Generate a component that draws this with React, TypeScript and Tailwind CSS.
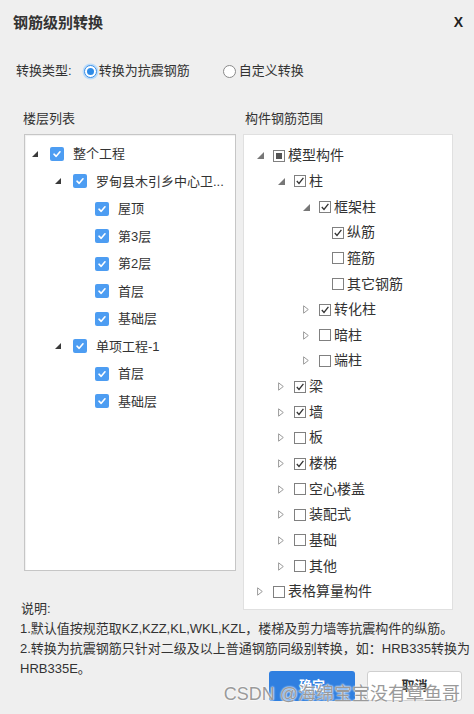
import React from "react";

type LeftNode = { label: string; level: number; expand?: boolean };
type RightNode = {
  label: string;
  level: number;
  tri: "open" | "closed" | "none";
  state: "on" | "off" | "part";
};

const leftTree: LeftNode[] = [
  { label: "整个工程", level: 0, expand: true },
  { label: "罗甸县木引乡中心卫...", level: 1, expand: true },
  { label: "屋顶", level: 2 },
  { label: "第3层", level: 2 },
  { label: "第2层", level: 2 },
  { label: "首层", level: 2 },
  { label: "基础层", level: 2 },
  { label: "单项工程-1", level: 1, expand: true },
  { label: "首层", level: 2 },
  { label: "基础层", level: 2 },
];

const rightTree: RightNode[] = [
  { label: "模型构件", level: 0, tri: "open", state: "part" },
  { label: "柱", level: 1, tri: "open", state: "on" },
  { label: "框架柱", level: 2, tri: "open", state: "on" },
  { label: "纵筋", level: 3, tri: "none", state: "on" },
  { label: "箍筋", level: 3, tri: "none", state: "off" },
  { label: "其它钢筋", level: 3, tri: "none", state: "off" },
  { label: "转化柱", level: 2, tri: "closed", state: "on" },
  { label: "暗柱", level: 2, tri: "closed", state: "off" },
  { label: "端柱", level: 2, tri: "closed", state: "off" },
  { label: "梁", level: 1, tri: "closed", state: "on" },
  { label: "墙", level: 1, tri: "closed", state: "on" },
  { label: "板", level: 1, tri: "closed", state: "off" },
  { label: "楼梯", level: 1, tri: "closed", state: "on" },
  { label: "空心楼盖", level: 1, tri: "closed", state: "off" },
  { label: "装配式", level: 1, tri: "closed", state: "off" },
  { label: "基础", level: 1, tri: "closed", state: "off" },
  { label: "其他", level: 1, tri: "closed", state: "off" },
  { label: "表格算量构件", level: 0, tri: "closed", state: "off" },
];

const leftIndent = ["pl-[4px]", "pl-[27px]", "pl-[49px]"];
const rightIndent = ["pl-[11px]", "pl-[32px]", "pl-[57px]", "pl-[70px]"];

function BlueCheck() {
  return (
    <span className="flex h-[14px] w-[14px] items-center justify-center rounded-[2px] bg-[#4d9df2]">
      <svg width="10" height="10" viewBox="0 0 10 10">
        <polyline
          points="2,5.2 4.2,7.3 8,2.8"
          fill="none"
          stroke="white"
          strokeWidth="1.6"
          strokeLinecap="round"
          strokeLinejoin="round"
        />
      </svg>
    </span>
  );
}

function GrayCheck({ state }: { state: RightNode["state"] }) {
  return (
    <span className="flex h-[12px] w-[12px] items-center justify-center border border-[#808080] bg-white">
      {state === "on" && (
        <svg width="10" height="10" viewBox="0 0 10 10">
          <polyline
            points="1.8,5 4,7.4 8.4,1.8"
            fill="none"
            stroke="#333"
            strokeWidth="1.3"
          />
        </svg>
      )}
      {state === "part" && <span className="h-[6px] w-[6px] bg-[#555]" />}
    </span>
  );
}

function Radio({ on }: { on?: boolean }) {
  return on ? (
    <span className="flex h-[13px] w-[13px] items-center justify-center rounded-full border border-[#3a8ee6] bg-white shadow-[0_0_0_1.5px_#bcdcfa]">
      <span className="h-[7px] w-[7px] rounded-full bg-[#2f8be6]" />
    </span>
  ) : (
    <span className="h-[13px] w-[13px] rounded-full border border-[#8a8a8a] bg-white" />
  );
}

export default function App() {
  return (
    <div className="relative h-[714px] w-[474px] overflow-hidden bg-[#efefef] font-['Liberation_Sans','Noto_Sans_CJK_SC',sans-serif] text-[#333]">
      <div className="flex h-[44px] items-center justify-between pl-[13px] pr-[11px]">
        <span className="text-[15px] font-bold leading-none text-[#333]">钢筋级别转换</span>
        <span className="text-[14px] font-bold leading-none text-[#222]">X</span>
      </div>

      <div className="mt-[15px] flex h-[24px] items-center pl-[16px] text-[13px]">
        <span>转换类型:</span>
        <span className="ml-[12px] flex items-center gap-[2px]">
          <Radio on />
          <span>转换为抗震钢筋</span>
        </span>
        <span className="ml-[33px] flex items-center gap-[3px]">
          <Radio />
          <span>自定义转换</span>
        </span>
      </div>

      <div className="mt-[26px] flex items-start">
        <div className="ml-[24px] w-[212px]">
          <div className="h-[20px] text-[13px] leading-[20px] -ml-px">楼层列表</div>
          <div className="mt-[5px] h-[437px] border border-[#c6c6c6] bg-white pt-[5px] shadow-[inset_1px_1px_1px_rgba(0,0,0,0.06)]">
            {leftTree.map((n, i) => (
              <div key={i} className={`flex h-[27.5px] items-center ${leftIndent[n.level]}`}>
                <span className="flex w-[12px] justify-center">
                  {n.expand && (
                    <svg width="6" height="6" viewBox="0 0 6 6">
                      <polygon points="6,0 6,6 0,6" fill="#3a3a3a" />
                    </svg>
                  )}
                </span>
                <span className="ml-[9px]">
                  <BlueCheck />
                </span>
                <span className="ml-[9px] whitespace-nowrap text-[13px]">{n.label}</span>
              </div>
            ))}
          </div>
          <div className="mt-[28px] h-[20px] text-[13px] leading-[20px] -ml-[3px]">说明:</div>
        </div>

        <div className="ml-[7px] w-[210px]">
          <div className="h-[20px] text-[13px] leading-[20px] ml-[2px]">构件钢筋范围</div>
          <div className="mt-[5px] h-[476px] border border-[#e0e0e0] bg-white pt-[8px]">
            {rightTree.map((n, i) => (
              <div key={i} className={`flex h-[25.65px] items-center ${rightIndent[n.level]}`}>
                <span className="flex w-[10px] justify-center">
                  {n.tri === "open" && (
                    <svg width="7" height="7" viewBox="0 0 7 7">
                      <polygon points="7,0 7,7 0,7" fill="#777" />
                    </svg>
                  )}
                  {n.tri === "closed" && (
                    <svg width="6" height="9" viewBox="0 0 6 9">
                      <polygon points="0.6,0.8 5.3,4.5 0.6,8.2" fill="none" stroke="#9a9a9a" strokeWidth="1" />
                    </svg>
                  )}
                </span>
                <span className="ml-[8px]">
                  <GrayCheck state={n.state} />
                </span>
                <span className="ml-[3px] whitespace-nowrap text-[14px] text-[#333]">{n.label}</span>
              </div>
            ))}
          </div>
        </div>
      </div>

      <div className="pl-[20px] text-[13px] leading-[20px] whitespace-nowrap">
        <div>1.默认值按规范取KZ,KZZ,KL,WKL,KZL，楼梯及剪力墙等抗震构件的纵筋。</div>
        <div>2.转换为抗震钢筋只针对二级及以上普通钢筋同级别转换，如：HRB335转换为</div>
        <div className="flex items-start justify-between pr-[12px]">
          <span>HRB335E。</span>
          <div className="mt-[12px] flex gap-[12px]">
            <button className="h-[30px] w-[86px] rounded-[3px] bg-[#2f7fe0] text-[13px] font-bold text-white">
              确定
            </button>
            <button className="h-[30px] w-[95px] rounded-[3px] border border-[#cfcfcf] bg-white text-[13px] font-bold text-[#333]">
              取消
            </button>
          </div>
        </div>
      </div>

      <div className="absolute right-[14px] top-[683px] whitespace-nowrap text-[18px] leading-[22px] text-[#9a9a9a] [text-shadow:0_0_2px_#fff,0_0_2px_#fff]">
        CSDN @海绵宝宝没有章鱼哥
      </div>
    </div>
  );
}
